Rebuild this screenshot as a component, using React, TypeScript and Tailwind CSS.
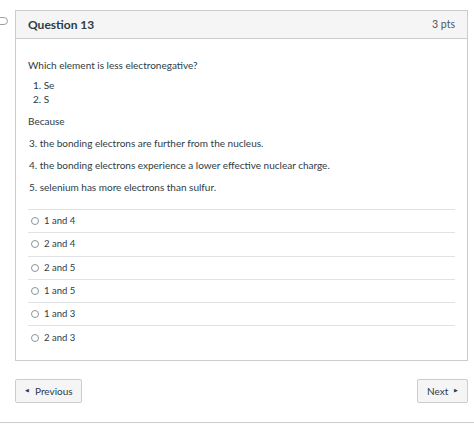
import React from "react";

const answers = ["1 and 4", "2 and 4", "2 and 5", "1 and 5", "1 and 3", "2 and 3"];

export default function App() {
  return (
    <div
      className="relative w-[474px] h-[428px] bg-white text-[#2d3b45] overflow-hidden"
      style={{ fontFamily: "Lato, 'Open Sans', sans-serif" }}
    >
      {/* left flag marker */}
      <div className="absolute left-[-6px] top-[17px] w-[14px] h-[8px] rounded-full border border-[#9aa3a9]" />

      <div className="pt-[10px] pl-[15px] pr-[6px]">
        <div className="border border-[#c7cdd1] h-[351px] flex flex-col">
          <div className="h-[28px] shrink-0 bg-[#f5f5f5] border-b border-[#c7cdd1] flex items-center justify-between pl-[12px] pr-[12px]">
            <span className="text-[12px] font-bold">Question 13</span>
            <span className="text-[10.5px] text-[#4a565e]">3 pts</span>
          </div>
          <div className="pl-[12px] pr-[12px] text-[10px]">
            <div className="h-[17px]" />
            <div className="h-[18px] flex items-center">Which element is less electronegative?</div>
            <div className="h-[4px]" />
            <div className="pl-[5px]">
              <div className="h-[14px] flex items-center">1. Se</div>
              <div className="h-[14px] flex items-center">2. S</div>
            </div>
            <div className="h-[8px]" />
            <div className="h-[14px] flex items-center">Because</div>
            <div className="pl-[1px]">
              <div className="h-[8px]" />
              <div className="h-[14px] flex items-center">3. the bonding electrons are further from the nucleus.</div>
              <div className="h-[8px]" />
              <div className="h-[14px] flex items-center">4. the bonding electrons experience a lower effective nuclear charge.</div>
              <div className="h-[8px]" />
              <div className="h-[14px] flex items-center">5. selenium has more electrons than sulfur.</div>
            </div>
            <div className="h-[15px]" />
            <div className="border-t border-[#dfe3e6]">
              {answers.map((a, i) => (
                <div
                  key={a}
                  className={`h-[23.3px] flex items-center pl-[3px] text-[9.5px] ${i < answers.length - 1 ? "border-b border-[#dfe3e6]" : ""}`}
                >
                  <span className="w-[8px] h-[8px] rounded-full border border-[#8b959b] bg-white" />
                  <span className="ml-[5px]">{a}</span>
                </div>
              ))}
            </div>
          </div>
        </div>
      </div>

      <div className="flex justify-between pl-[15px] pr-[6px] mt-[18px]">
        <div className="h-[24px] w-[67px] pl-[9px] flex items-center gap-[6px] bg-[#f5f5f5] border border-[#c7cdd1] rounded-[2px] text-[10px]">
          <span className="text-[5px]">◀</span>
          <span>Previous</span>
        </div>
        <div className="h-[24px] w-[51px] pl-[9px] flex items-center gap-[6px] bg-[#f5f5f5] border border-[#c7cdd1] rounded-[2px] text-[10px]">
          <span>Next</span>
          <span className="text-[5px]">▶</span>
        </div>
      </div>

      <div className="absolute left-0 right-0 top-[422px] border-t border-[#c7cdd1]" />
    </div>
  );
}
